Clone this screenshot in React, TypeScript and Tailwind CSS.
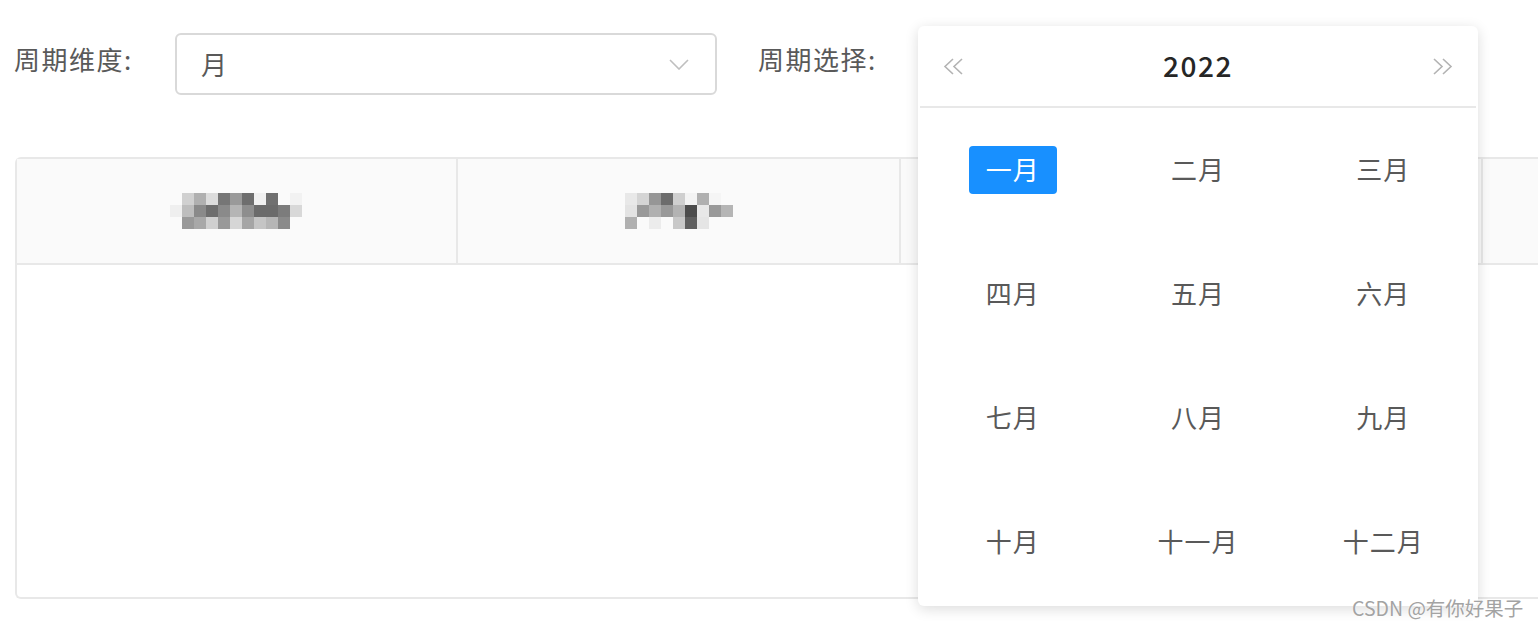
import React from "react";

const months = ["一月", "二月", "三月", "四月", "五月", "六月", "七月", "八月", "九月", "十月", "十一月", "十二月"];

// blurred header text, drawn as mosaic rows: [startCol, colours]
const mosaicA: [number, string[]][] = [
  [1, ["#d0d0d0", "#b0b0b0", "#dcdcdc", "#767676", "#9a9a9a", "#6e6e6e", "#f0f0f0", "#707070", "#fafafa", "#f2f2f2"]],
  [0, ["#efefef", "#bdbdbd", "#8a8a8a", "#6e6e6e", "#8a8a8a", "#b5b5b5", "#8e8e8e", "#6b6b6b", "#6b6b6b", "#7c7c7c", "#d8d8d8"]],
  [1, ["#999999", "#a8a8a8", "#d0d0d0", "#999999", "#d6d6d6", "#a5a5a5", "#c5c5c5", "#b6b6b6", "#8a8a8a"]],
];
const mosaicB: [number, string[]][] = [
  [0, ["#e8e8e8", "#d4d4d4", "#969696", "#6c6c6c", "#cfcfcf", "#f3f3f3", "#b0b0b0", "#f5f5f5"]],
  [0, ["#e3e3e3", "#999999", "#b0b0b0", "#999999", "#b3b3b3", "#4c4c4c", "#e8e8e8", "#999999", "#b5b5b5"]],
  [0, ["#b0b0b0", "#fafafa", "#ececec", "#fafafa", "#c8c8c8", "#5f5f5f", "#e5e5e5"]],
];

function Mosaic({ rows, width }: { rows: [number, string[]][]; width: number }) {
  return (
    <svg width={width} height={36} viewBox={`0 0 ${width} 36`}>
      {rows.map(([start, cols], r) =>
        cols.map((c, i) => <rect key={`${r}-${i}`} x={(start + i) * 12} y={r * 12} width={12} height={12} fill={c} />)
      )}
    </svg>
  );
}

function DoubleChevron({ dir }: { dir: "left" | "right" }) {
  const d =
    dir === "left"
      ? "M11 1 L3 8.5 L11 16 M20 1 L12 8.5 L20 16"
      : "M2 1 L10 8.5 L2 16 M11 1 L19 8.5 L11 16";
  return (
    <svg width="22" height="17" viewBox="0 0 22 17" fill="none">
      <path d={d} stroke="#b3b3b3" strokeWidth="1.6" />
    </svg>
  );
}

export default function App() {
  return (
    <div
      className="relative h-[626px] w-full overflow-hidden bg-white text-[#595959]"
      style={{ fontFamily: '"Noto Sans CJK SC", "Noto Sans", sans-serif' }}
    >
      {/* filter row */}
      <div className="flex items-center pt-[33px] pl-[14px]">
        <span className="mb-[10px] w-[161px] text-[26px] leading-[52px] tracking-[1.5px]">周期维度:</span>
        <div className="flex h-[62px] w-[542px] items-center justify-between rounded-[6px] border-2 border-[#d9d9d9] pl-[24px] pr-[26px]">
          <span className="pb-[2px] text-[26px]">月</span>
          <svg width="20" height="11" viewBox="0 0 20 11" fill="none">
            <path d="M1 1 L10 10 L19 1" stroke="#bfbfbf" strokeWidth="1.6" />
          </svg>
        </div>
        <span className="mb-[10px] ml-[41px] text-[26px] leading-[52px] tracking-[1.5px]">周期选择:</span>
      </div>

      {/* table */}
      <div className="ml-[15px] mt-[62px] h-[442px] w-[1560px] rounded-l-[6px] border-2 border-r-0 border-[#e8e8e8]">
        <div className="flex h-[106px] border-b-2 border-[#e8e8e8] bg-[#fafafa]">
          <div className="flex w-[441px] items-center justify-center border-r-2 border-[#e8e8e8] pr-[2px]">
            <Mosaic rows={mosaicA} width={132} />
          </div>
          <div className="flex w-[443px] items-center justify-center border-r-2 border-[#e8e8e8]">
            <Mosaic rows={mosaicB} width={108} />
          </div>
          <div className="w-[582px] border-r-2 border-[#e8e8e8]" />
          <div className="flex-1" />
        </div>
      </div>

      {/* month picker popup */}
      <div className="absolute left-[918px] top-[26px] h-[580px] w-[560px] rounded-[6px] bg-white shadow-[0_3px_14px_rgba(0,0,0,0.14)]">
        <div className="mx-[2px] flex h-[82px] items-center justify-between border-b-2 border-[#e8e8e8] px-[22px]">
          <DoubleChevron dir="left" />
          <span className="pb-[2px] text-[28px] font-medium tracking-[1.5px] text-[#262626]">2022</span>
          <DoubleChevron dir="right" />
        </div>
        <div className="mx-[2px] grid grid-cols-3 grid-rows-4">
          {months.map((m, i) => (
            <div key={m} className="flex h-[124px] items-center justify-center">
              <span
                className={
                  i === 0
                    ? "flex h-[48px] w-[88px] items-center justify-center rounded-[4px] bg-[#1890ff] pb-[4px] text-[26px] tracking-[1px] text-white"
                    : "inline-block pb-[4px] text-[26px] tracking-[1px]"
                }
              >
                {m}
              </span>
            </div>
          ))}
        </div>
      </div>

      {/* watermark */}
      <span className="absolute left-[1352px] top-[593px] text-[19.5px] text-[#a3a3a3] [text-shadow:0_0_2px_#fff]">
        CSDN @有你好果子
      </span>
    </div>
  );
}
